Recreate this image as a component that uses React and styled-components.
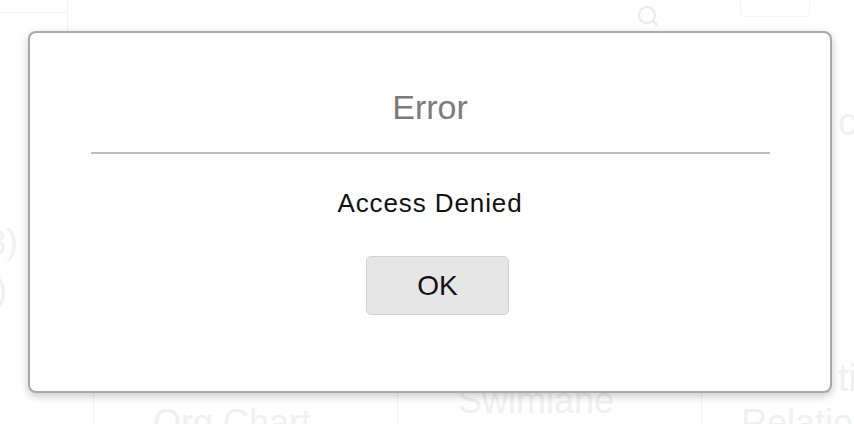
import React from 'react'
import styled, { createGlobalStyle } from 'styled-components';
import { Search } from 'lucide-react';

const GlobalStyle = createGlobalStyle`
  html, body {
    margin: 0;
    padding: 0;
    background: #fff;
  }
  body {
    font-family: "Liberation Sans", Arial, Helvetica, sans-serif;
  }
`;

const Screen = styled.div`
  position: relative;
  width: 100vw;
  height: 100vh;
  overflow: hidden;
  background: #fff;
`;

/* faded page behind the dialog */
const Page = styled.div`
  display: flex;
  flex-direction: column;
  height: 100%;
  color: #f0f0f0;
`;

const TopBar = styled.div`
  display: flex;
  align-items: flex-start;
  height: 40px;
  flex-shrink: 0;
`;

const Brand = styled.div`
  width: 68px;
  height: 40px;
  border-right: 1px solid #f3f3f3;
  box-sizing: border-box;
  padding-top: 12px;
  &::before {
    content: '';
    display: block;
    height: 1px;
    background: #f3f3f3;
  }
`;

const SearchSlot = styled.div`
  margin-left: 568px;
  padding-top: 4px;
  color: #ececec;
`;

const UserBox = styled.div`
  margin-left: 80px;
  width: 68px;
  height: 16px;
  border: 1px solid #f3f3f3;
  border-top: none;
  border-radius: 0 0 4px 4px;
`;

const Body = styled.div`
  flex: 1;
  display: flex;
  min-height: 0;
`;

const LeftRail = styled.div`
  width: 20px;
  overflow: hidden;
  padding-top: 184px;
`;

const RailItem = styled.div`
  display: flex;
  justify-content: flex-end;
  white-space: nowrap;
  font-size: 35px;
  line-height: 36px;
  margin-right: ${p => p.$inset}px;
  margin-top: ${p => p.$gap}px;
`;

const Center = styled.div`
  flex: 1;
`;

const RightRail = styled.div`
  width: 16px;
  overflow: visible;
  padding-top: 63px;
`;

const RightItem = styled.div`
  white-space: nowrap;
  font-size: 38px;
  line-height: 38px;
  margin-top: ${p => p.$gap}px;
`;

const CardRow = styled.div`
  display: grid;
  grid-template-columns: 277px 277px 277px;
  column-gap: 27px;
  height: 44px;
  flex-shrink: 0;
  padding-left: 93px;
`;

const Card = styled.div`
  border-left: 1px solid #f2f2f2;
  text-align: center;
  white-space: nowrap;
  font-size: 36px;
  line-height: 36px;
  padding-top: ${p => p.$top}px;
`;

/* dialog layer */
const Overlay = styled.div`
  position: absolute;
  inset: 0;
  display: flex;
  align-items: center;
  justify-content: center;
  padding-left: 6px;
`;

const Dialog = styled.div`
  width: 804px;
  box-sizing: border-box;
  display: flex;
  flex-direction: column;
  align-items: center;
  padding: 57px 0 76px;
  background: #fff;
  border: 2px solid #a9a9a9;
  border-radius: 8px;
  box-shadow: 0 3px 8px rgba(0, 0, 0, 0.22);
`;

const Title = styled.h2`
  margin: 0;
  font-size: 34px;
  line-height: 34px;
  font-weight: 400;
  color: #7b7b7b;
`;

const Divider = styled.hr`
  width: 679px;
  height: 2px;
  margin: 28px 0 0;
  border: none;
  background: #bebebe;
`;

const Message = styled.p`
  margin: 36px 0 0;
  font-size: 26px;
  line-height: 26px;
  letter-spacing: 0.9px;
  color: #111;
`;

const OkButton = styled.button`
  margin: 40px 0 0 15px;
  width: 143px;
  height: 59px;
  box-sizing: border-box;
  background: #e6e6e6;
  border: 1px solid #d2d2d2;
  border-radius: 5px;
  font-family: inherit;
  font-size: 28px;
  color: #111;
  cursor: pointer;
`;

export default function App() {
  return (
    <Screen>
      <GlobalStyle />
      <Page>
        <TopBar>
          <Brand />
          <SearchSlot>
            <Search size={24} strokeWidth={2.5} />
          </SearchSlot>
          <UserBox />
        </TopBar>
        <Body>
          <LeftRail>
            <RailItem $inset={2} $gap={0}>Recent (3)</RailItem>
            <RailItem $inset={13} $gap={12}>Shared (1)</RailItem>
          </LeftRail>
          <Center />
          <RightRail>
            <RightItem $gap={0}>concept</RightItem>
            <RightItem $gap={218}>tion</RightItem>
          </RightRail>
        </Body>
        <CardRow>
          <Card $top={25}>Org Chart</Card>
          <Card $top={3}>Swimlane</Card>
          <Card $top={25}>Relationship</Card>
        </CardRow>
      </Page>
      <Overlay>
        <Dialog role="alertdialog">
          <Title>Error</Title>
          <Divider />
          <Message>Access Denied</Message>
          <OkButton>OK</OkButton>
        </Dialog>
      </Overlay>
    </Screen>
  )
}
